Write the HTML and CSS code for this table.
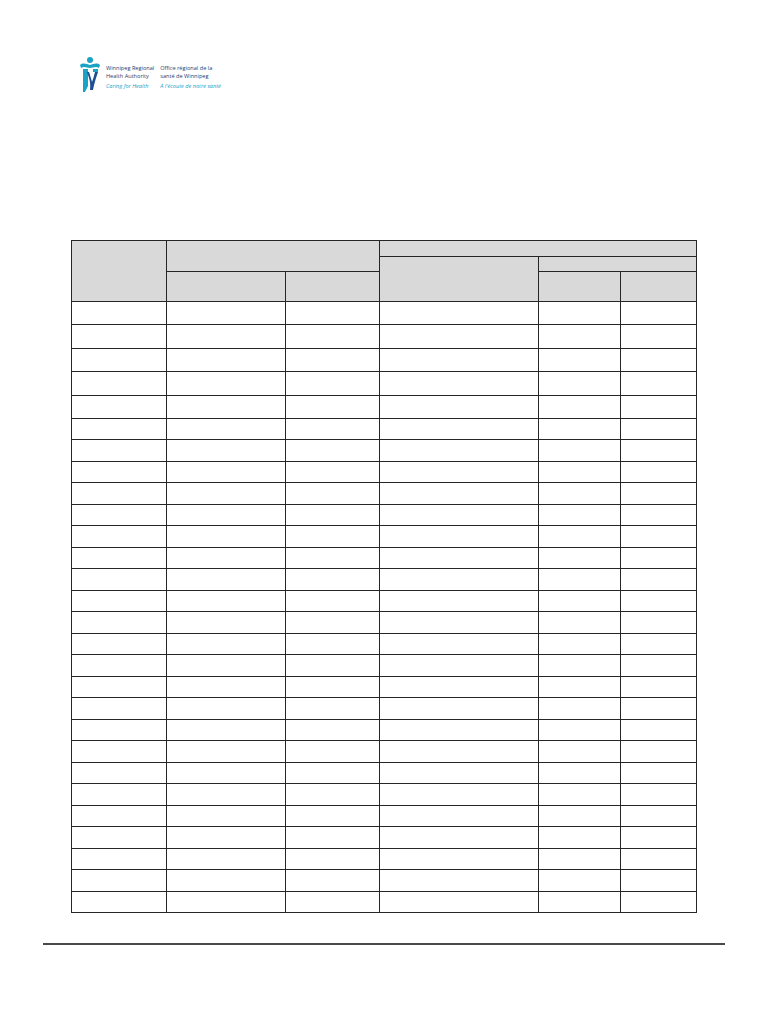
FILE: index.html
```html
<!DOCTYPE html>
<html lang="en">
<head>
<meta charset="utf-8">
<title>WRHA Form</title>
<link rel="stylesheet" href="styles.css">
</head>
<body>
<div class="page">
  <header class="logo">
    <svg class="logo-mark" width="22" height="38" viewBox="0 0 22 38">
      <circle cx="11" cy="4" r="3" fill="#1ba3c6"/>
      <path d="M1 9 C4 6 8 8 11 9 C14 8 18 6 21 9 L20 12 C17 10 14 12 11 12 C8 12 5 10 2 12 Z" fill="#1ba3c6"/>
      <path d="M4 13 L9 13 L9 30 L6 36 L4 36 Z" fill="#1ba3c6"/>
      <path d="M8 16 C10 22 12 26 11 34 L14 34 C15 28 17 22 19 16 L16 16 C15 20 14 23 13 26 C12 22 11 19 10 16 Z" fill="#1d4f91"/>
      <path d="M14 13 L19 13 L19 16 L14 16 Z" fill="#1ba3c6"/>
    </svg>
    <div class="logo-text">
      <div class="logo-col">
        <span class="org">Winnipeg Regional</span>
        <span class="org">Health Authority</span>
        <span class="tag">Caring for Health</span>
      </div>
      <div class="logo-col">
        <span class="org">Office régional de la</span>
        <span class="org">santé de Winnipeg</span>
        <span class="tag">À l'écoute de notre santé</span>
      </div>
    </div>
  </header>

  <table class="grid">
    <colgroup>
      <col class="c1"><col class="c2"><col class="c3"><col class="c4"><col class="c5"><col class="c6">
    </colgroup>
    <thead>
      <tr class="h1">
        <th rowspan="3"></th>
        <th colspan="2" rowspan="2"></th>
        <th colspan="3"></th>
      </tr>
      <tr class="h2">
        <th rowspan="2"></th>
        <th colspan="2"></th>
      </tr>
      <tr class="h3">
        <th></th><th></th><th></th><th></th>
      </tr>
    </thead>
    <tbody>
      <tr class="tall"><td></td><td></td><td></td><td></td><td></td><td></td></tr>
      <tr class="tall"><td></td><td></td><td></td><td></td><td></td><td></td></tr>
      <tr class="tall"><td></td><td></td><td></td><td></td><td></td><td></td></tr>
      <tr class="tall"><td></td><td></td><td></td><td></td><td></td><td></td></tr>
      <tr class="tall"><td></td><td></td><td></td><td></td><td></td><td></td></tr>
      <tr><td></td><td></td><td></td><td></td><td></td><td></td></tr>
      <tr><td></td><td></td><td></td><td></td><td></td><td></td></tr>
      <tr><td></td><td></td><td></td><td></td><td></td><td></td></tr>
      <tr><td></td><td></td><td></td><td></td><td></td><td></td></tr>
      <tr><td></td><td></td><td></td><td></td><td></td><td></td></tr>
      <tr><td></td><td></td><td></td><td></td><td></td><td></td></tr>
      <tr><td></td><td></td><td></td><td></td><td></td><td></td></tr>
      <tr><td></td><td></td><td></td><td></td><td></td><td></td></tr>
      <tr><td></td><td></td><td></td><td></td><td></td><td></td></tr>
      <tr><td></td><td></td><td></td><td></td><td></td><td></td></tr>
      <tr><td></td><td></td><td></td><td></td><td></td><td></td></tr>
      <tr><td></td><td></td><td></td><td></td><td></td><td></td></tr>
      <tr><td></td><td></td><td></td><td></td><td></td><td></td></tr>
      <tr><td></td><td></td><td></td><td></td><td></td><td></td></tr>
      <tr><td></td><td></td><td></td><td></td><td></td><td></td></tr>
      <tr><td></td><td></td><td></td><td></td><td></td><td></td></tr>
      <tr><td></td><td></td><td></td><td></td><td></td><td></td></tr>
      <tr><td></td><td></td><td></td><td></td><td></td><td></td></tr>
      <tr><td></td><td></td><td></td><td></td><td></td><td></td></tr>
      <tr><td></td><td></td><td></td><td></td><td></td><td></td></tr>
      <tr><td></td><td></td><td></td><td></td><td></td><td></td></tr>
      <tr><td></td><td></td><td></td><td></td><td></td><td></td></tr>
      <tr><td></td><td></td><td></td><td></td><td></td><td></td></tr>
    </tbody>
  </table>

  <div class="footer-rule"></div>
</div>
</body>
</html>
```

FILE: styles.css
```css
html, body {
  margin: 0;
  padding: 0;
  background: #ffffff;
}

body {
  font-family: "Liberation Sans", Arial, sans-serif;
}

.page {
  padding-top: 56px;
  width: 768px;
}

.logo {
  display: flex;
  align-items: flex-start;
  margin-left: 79px;
  height: 38px;
  gap: 5px;
}

.logo-mark {
  display: block;
  flex: none;
}

.logo-text {
  display: flex;
  gap: 6px;
  padding-top: 9px;
}

.logo-col {
  display: flex;
  flex-direction: column;
}

.org {
  font-family: "Open Sans", "Liberation Sans", sans-serif;
  font-size: 5.6px;
  line-height: 7.5px;
  color: #1d3e73;
  white-space: nowrap;
}

.tag {
  font-family: "Open Sans", "Liberation Sans", sans-serif;
  font-size: 5.6px;
  line-height: 7.5px;
  margin-top: 3px;
  font-style: italic;
  color: #1ba3c6;
  white-space: nowrap;
}

.grid {
  border-collapse: collapse;
  table-layout: fixed;
  width: 625px;
  margin-left: 71px;
  margin-top: 146px;
}

.grid th,
.grid td {
  border: 1px solid #262626;
  padding: 0;
}

.grid th {
  background: #d9d9d9;
}

.c1 { width: 95px; }
.c2 { width: 119px; }
.c3 { width: 94px; }
.c4 { width: 159px; }
.c5 { width: 82px; }
.c6 { width: 76px; }

.h1 th { height: 15px; }
.h2 th { height: 14px; }
.h3 th { height: 29px; }

.grid tbody tr { height: 21.5px; }
.grid tbody tr.tall { height: 23.4px; }

.footer-rule {
  margin-left: 43px;
  margin-top: 30px;
  width: 682px;
  height: 2px;
  background: #4a4a4a;
}
```
